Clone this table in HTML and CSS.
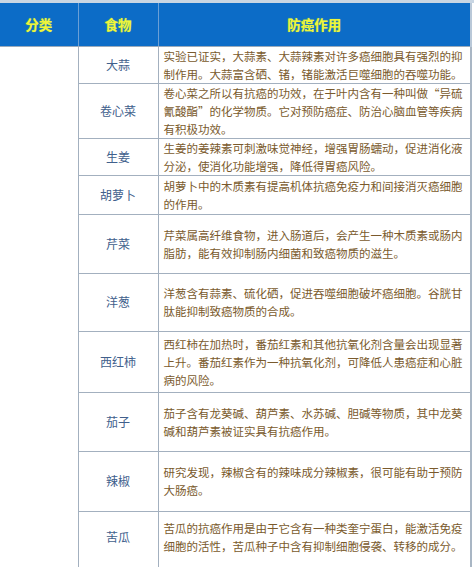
FILE: index.html
```html
<!DOCTYPE html>
<html lang="zh-CN">
<head>
<meta charset="utf-8">
<title>防癌食物</title>
<link rel="stylesheet" href="styles.css">
</head>
<body>
<div class="page">
<table class="tbl">
  <colgroup>
    <col class="c1"><col class="c2"><col class="c3">
  </colgroup>
  <thead>
    <tr class="head">
      <th>分类</th><th>食物</th><th>防癌作用</th>
    </tr>
  </thead>
  <tbody>
    <tr class="r1">
      <td class="cat" rowspan="10"></td>
      <td class="food">大蒜</td>
      <td class="desc">实验已证实，大蒜素、大蒜辣素对许多癌细胞具有强烈的抑<br>制作用。大蒜富含硒、锗，锗能激活巨噬细胞的吞噬功能。</td>
    </tr>
    <tr class="r2">
      <td class="food">卷心菜</td>
      <td class="desc">卷心菜之所以有抗癌的功效，在于叶内含有一种叫做“异硫<br>氰酸酯”的化学物质。它对预防癌症、防治心脑血管等疾病<br>有积极功效。</td>
    </tr>
    <tr class="r3">
      <td class="food">生姜</td>
      <td class="desc">生姜的姜辣素可刺激味觉神经，增强胃肠蠕动，促进消化液<br>分泌，使消化功能增强，降低得胃癌风险。</td>
    </tr>
    <tr class="r4">
      <td class="food">胡萝卜</td>
      <td class="desc">胡萝卜中的木质素有提高机体抗癌免疫力和间接消灭癌细胞<br>的作用。</td>
    </tr>
    <tr class="r5">
      <td class="food">芹菜</td>
      <td class="desc">芹菜属高纤维食物，进入肠道后，会产生一种木质素或肠内<br>脂肪，能有效抑制肠内细菌和致癌物质的滋生。</td>
    </tr>
    <tr class="r6">
      <td class="food">洋葱</td>
      <td class="desc">洋葱含有蒜素、硫化硒，促进吞噬细胞破坏癌细胞。谷胱甘<br>肽能抑制致癌物质的合成。</td>
    </tr>
    <tr class="r7">
      <td class="food">西红柿</td>
      <td class="desc">西红柿在加热时，番茄红素和其他抗氧化剂含量会出现显著<br>上升。番茄红素作为一种抗氧化剂，可降低人患癌症和心脏<br>病的风险。</td>
    </tr>
    <tr class="r8">
      <td class="food">茄子</td>
      <td class="desc">茄子含有龙葵碱、葫芦素、水苏碱、胆碱等物质，其中龙葵<br>碱和葫芦素被证实具有抗癌作用。</td>
    </tr>
    <tr class="r9">
      <td class="food">辣椒</td>
      <td class="desc">研究发现，辣椒含有的辣味成分辣椒素，很可能有助于预防<br>大肠癌。</td>
    </tr>
    <tr class="r10">
      <td class="food">苦瓜</td>
      <td class="desc">苦瓜的抗癌作用是由于它含有一种类奎宁蛋白，能激活免疫<br>细胞的活性，苦瓜种子中含有抑制细胞侵袭、转移的成分。</td>
    </tr>
  </tbody>
</table>
</div>
</body>
</html>
```

FILE: styles.css
```css
html, body {
  margin: 0;
  padding: 0;
  background: #ffffff;
}

body {
  font-family: "Noto Sans CJK SC", "Noto Sans", sans-serif;
}

.page {
  width: 474px;
  height: 567px;
  overflow: hidden;
  border-top: 3px solid #c9d6e3;
  box-sizing: border-box;
}

.tbl {
  width: 471px;
  table-layout: fixed;
  border-collapse: collapse;
  border-spacing: 0;
}

.c1 { width: 78px; }
.c2 { width: 80px; }
.c3 { width: 313px; }

.head {
  height: 43px;
  background: #0c6cc7;
}

.head th {
  padding: 0;
  color: #eef53c;
  font-size: 13.5px;
  font-weight: bold;
  text-align: center;
  vertical-align: middle;
  text-shadow: 0 0 1px #8fcf52;
  border-left: 1px solid #6a9fd6;
  border-bottom: 1px solid #9aaabb;
}

.head th:first-child {
  border-left: none;
}

.head th:last-child {
  border-right: 2px solid #b9c8d8;
}

.tbl td {
  padding: 0;
  vertical-align: middle;
  border: 1px solid #a3b0bf;
}

.tbl td.cat {
  border-left: none;
  border-top: none;
  background: #ffffff;
}

.tbl td.desc {
  border-right: 2px solid #a9b6c4;
}

.food {
  text-align: center;
  color: #41608c;
  font-size: 12px;
  line-height: 18px;
}

.desc {
  padding: 0 2px 0 5px !important;
  color: #7a5a2c;
  font-size: 11.5px;
  line-height: 18px;
  white-space: nowrap;
}

.r1 { height: 37px; }
.r2 { height: 54px; }
.r3 { height: 35px; }
.r4 { height: 39px; }
.r5 { height: 59px; }
.r6 { height: 58px; }
.r7 { height: 61px; }
.r8 { height: 59px; }
.r9 { height: 60px; }
.r10 { height: 60px; }

.r10 td.food,
.r10 td.desc {
  padding-bottom: 8px !important;
}
```
